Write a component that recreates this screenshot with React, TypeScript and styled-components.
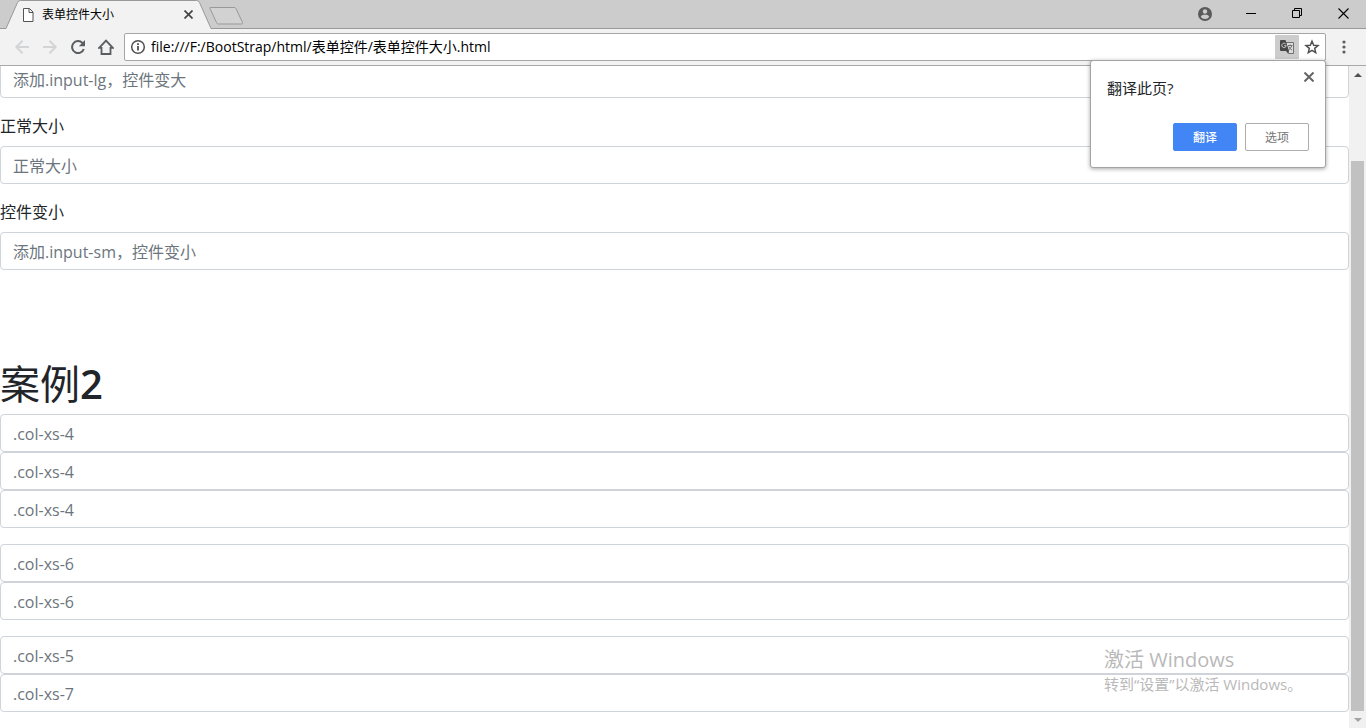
import React from "react";
import styled, { createGlobalStyle } from "styled-components";

const GlobalStyle = createGlobalStyle`
  *, *::before, *::after { box-sizing: border-box; }
  body {
    margin: 0;
    font-family: "Open Sans", "Noto Sans CJK SC", sans-serif;
    font-size: 16px;
    line-height: 24px;
    color: #212529;
    background: #fff;
  }
  button, input { font-family: inherit; }
`;

const Window = styled.div`
  position: relative;
  display: flex;
  flex-direction: column;
  height: 100vh;
  overflow: hidden;
`;

const TabStrip = styled.header`
  display: flex;
  flex: none;
  height: 29px;
  padding-left: 6px;
  background: #ccc;
  box-shadow: inset 0 -1px #999;
`;

const Tab = styled.div`
  position: relative;
  display: flex;
  align-items: center;
  width: 205px;
  padding: 0 16px;
`;

const TabShape = styled.svg`
  position: absolute;
  inset: 0;
`;

const TabTitle = styled.span`
  position: relative;
  flex: 1;
  margin-left: 8px;
  font-size: 12px;
  color: #000;
`;

const FileGlyph = styled.svg`
  position: relative;
  flex: none;
`;

const PlainButton = styled.button`
  display: flex;
  align-items: center;
  justify-content: center;
  flex: none;
  padding: 0;
  border: 0;
  background: none;
  color: inherit;
`;

const TabClose = styled(PlainButton)`
  position: relative;
  width: 14px;
  height: 14px;
  color: #444;
`;

const NewTab = styled(PlainButton)`
  width: 36px;
  height: 29px;
  margin-left: -2px;
`;

const WindowControls = styled.div`
  display: flex;
  margin-left: auto;
`;

const WindowButton = styled(PlainButton)`
  width: 46px;
  height: 27px;
  color: #000;
`;

const Toolbar = styled.nav`
  position: relative;
  z-index: 1;
  display: flex;
  flex: none;
  align-items: center;
  height: 37px;
  padding: 0 8px;
  border-bottom: 1px solid #a9a9a9;
  background: #f2f2f2;
`;

const ToolButton = styled(PlainButton)<{ $muted?: boolean }>`
  width: 28px;
  height: 28px;
  color: ${(p) => (p.$muted ? "#d3d4d6" : "#5a5d62")};
`;

const Omnibox = styled.div`
  display: flex;
  flex: 1;
  align-items: center;
  height: 28px;
  margin: 0 4px;
  padding: 0 1px 0 5px;
  border: 1px solid #a6a6a6;
  border-radius: 2px;
  background: #fff;
`;

const UrlInput = styled.input`
  flex: 1;
  min-width: 0;
  height: 24px;
  margin-left: 5px;
  padding: 0 0 2px;
  border: 0;
  outline: 0;
  background: none;
  font-size: 14px;
  color: #000;
`;

const OmniboxButton = styled(PlainButton)<{ $active?: boolean }>`
  width: 24px;
  height: 24px;
  margin-right: ${(p) => (p.$active ? "1px" : "0")};
  color: #505050;
  border-radius: 1px;
  background: ${(p) => (p.$active ? "#ccc" : "none")};
`;

const Bubble = styled.section`
  position: absolute;
  top: 31px;
  right: 40px;
  display: flex;
  flex-direction: column;
  justify-content: space-between;
  width: 236px;
  height: 108px;
  padding: 15px 16px 16px;
  border: 1px solid #a4a4a4;
  border-radius: 3px;
  background: #fff;
  box-shadow: 0 1px 4px rgba(0, 0, 0, 0.35);
`;

const BubbleTitle = styled.p`
  margin: 0;
  font-size: 15px;
`;

const BubbleClose = styled(PlainButton)`
  position: absolute;
  top: 8px;
  right: 8px;
  width: 16px;
  height: 16px;
  color: #666;
`;

const BubbleActions = styled.div`
  display: flex;
  justify-content: flex-end;
  gap: 8px;
`;

const BubbleButton = styled.button<{ $primary?: boolean }>`
  width: 64px;
  height: 28px;
  padding: 0;
  border: 1px solid ${(p) => (p.$primary ? "#4285f4" : "#adadad")};
  border-radius: 2px;
  background: ${(p) => (p.$primary ? "#4285f4" : "#fff")};
  color: ${(p) => (p.$primary ? "#fff" : "#757575")};
  font-size: 12px;
  font-weight: ${(p) => (p.$primary ? 500 : 400)};
`;

const Viewport = styled.div`
  display: flex;
  flex: 1;
  min-height: 0;
  overflow: hidden;
`;

const Page = styled.main`
  flex: 1;
  min-width: 0;
  margin-top: -6px;
`;

const Group = styled.div`
  margin-bottom: 16px;
`;

const Label = styled.label`
  display: block;
  margin-bottom: 8px;
`;

const Control = styled.input`
  display: block;
  width: 100%;
  height: 38px;
  padding: 7px 12px 5px;
  border: 1px solid #ced4da;
  border-radius: 4px;
  background: #fff;
  font-size: 16px;
  line-height: 24px;
  color: #495057;
  &::placeholder { color: #6c757d; opacity: 1; }
`;

const Heading = styled.h1`
  margin: 90px 0 6px;
  font-size: 40px;
  font-weight: 400;
  line-height: 48px;
`;

const HeadingDigit = styled.span`
  font-weight: 600;
`;

const Scrollbar = styled.div`
  display: flex;
  flex: none;
  flex-direction: column;
  width: 17px;
  background: #f1f1f1;
`;

const ScrollArrow = styled(PlainButton)<{ $muted?: boolean }>`
  height: 17px;
  color: ${(p) => (p.$muted ? "#a3a3a3" : "#505050")};
`;

const ScrollSpace = styled.div`
  flex: 78;
`;

const ScrollThumb = styled.div`
  flex: 550;
  margin: 0 2px;
  background: #c1c1c1;
`;

const Watermark = styled.aside`
  position: absolute;
  right: 62px;
  bottom: 32px;
  width: 200px;
  color: #b9b9b9;
  white-space: nowrap;
  pointer-events: none;
`;

const WatermarkTitle = styled.div`
  font-size: 20px;
`;

const WatermarkText = styled.div`
  font-size: 15px;
`;

const rows = [
  [".col-xs-4", ".col-xs-4", ".col-xs-4"],
  [".col-xs-6", ".col-xs-6"],
  [".col-xs-5", ".col-xs-7"],
];

const Cross = ({ size, width }: { size: number; width: number }) => (
  <svg width={size} height={size} viewBox={`0 0 ${size} ${size}`} stroke="currentColor" strokeWidth={width}>
    <path d={`M.5 .5L${size - 0.5} ${size - 0.5}M${size - 0.5} .5L.5 ${size - 0.5}`} />
  </svg>
);

export default function App() {
  return (
    <Window>
      <GlobalStyle />
      <TabStrip>
        <Tab>
          <TabShape width="205" height="29" viewBox="0 0 205 29">
            <path d="M0 28.5L11.5 2.5Q12.5 .5 14.5 .5H190.5Q192.5 .5 193.5 2.5L205 28.5V29H0Z" fill="#f2f2f2" />
            <path d="M0 28.5L11.5 2.5Q12.5 .5 14.5 .5H190.5Q192.5 .5 193.5 2.5L205 28.5" fill="none" stroke="#999" />
          </TabShape>
          <FileGlyph width="12" height="14" viewBox="0 0 12 14" fill="#fff" stroke="#555" strokeWidth="1">
            <path d="M1.5 .5H7.5L11 4V13.5H1.5ZM7 .5V4.5H11" />
          </FileGlyph>
          <TabTitle>表单控件大小</TabTitle>
          <TabClose aria-label="关闭标签页"><Cross size={9} width={1.7} /></TabClose>
        </Tab>
        <NewTab aria-label="新标签页">
          <svg width="36" height="20" viewBox="0 0 36 20">
            <path d="M1 3.5Q0 2.5 1.5 2.5H25Q26.5 2.5 27 3.5L33.5 17.5Q34 19 32.5 19H9.5Q8 19 7.5 17.5Z" fill="#d2d2d2" stroke="#999" />
          </svg>
        </NewTab>
        <WindowControls>
          <WindowButton aria-label="用户">
            <svg width="14" height="14" viewBox="0 0 14 14">
              <circle cx="7" cy="7" r="7" fill="#5a5a5a" />
              <circle cx="7" cy="4.5" r="2.2" fill="#ccc" />
              <path d="M2.8 9.8C3.2 8 5.5 7.8 7 7.8S10.8 8 11.2 9.8C10.2 11.2 8.7 12 7 12S3.8 11.2 2.8 9.8Z" fill="#ccc" />
            </svg>
          </WindowButton>
          <WindowButton aria-label="最小化">
            <svg width="10" height="11" viewBox="0 0 10 11" stroke="currentColor"><path d="M0 5.5H10" /></svg>
          </WindowButton>
          <WindowButton aria-label="还原">
            <svg width="10" height="11" viewBox="0 0 10 11" fill="none" stroke="currentColor">
              <path d="M.5 2.5H7.5V9.5H.5ZM2.5 2.5V.5H9.5V7.5H7.5" />
            </svg>
          </WindowButton>
          <WindowButton aria-label="关闭"><Cross size={11} width={1.1} /></WindowButton>
        </WindowControls>
      </TabStrip>

      <Toolbar>
        <ToolButton $muted aria-label="后退">
          <svg width="14" height="14" viewBox="0 0 14 14" fill="none" stroke="currentColor" strokeWidth="2">
            <path d="M14 7H1.5M7.5 .8L1.3 7L7.5 13.2" />
          </svg>
        </ToolButton>
        <ToolButton $muted aria-label="前进">
          <svg width="14" height="14" viewBox="0 0 14 14" fill="none" stroke="currentColor" strokeWidth="2">
            <path d="M0 7H12.5M6.5 .8L12.7 7L6.5 13.2" />
          </svg>
        </ToolButton>
        <ToolButton aria-label="重新加载">
          <svg width="14" height="14" viewBox="0 0 14 14" fill="none" stroke="currentColor" strokeWidth="2">
            <path d="M12.8 9A6 6 0 1 1 11.4 2.9L12 3.5" />
            <path d="M14 0V6.2H7.8Z" fill="currentColor" stroke="none" />
          </svg>
        </ToolButton>
        <ToolButton aria-label="主页">
          <svg width="16" height="16" viewBox="0 0 16 16" fill="none" stroke="currentColor" strokeWidth="1.8">
            <path d="M1.2 8.8H3.5V15H12.5V8.8H14.8L8 1.6Z" />
          </svg>
        </ToolButton>
        <Omnibox>
          <svg width="16" height="16" viewBox="0 0 16 16" fill="none" stroke="#505050">
            <circle cx="8" cy="8" r="6.3" strokeWidth="1.5" />
            <path d="M8 7V11.5M8 4.2V6" strokeWidth="1.8" />
          </svg>
          <UrlInput aria-label="地址" defaultValue="file:///F:/BootStrap/html/表单控件/表单控件大小.html" />
          <OmniboxButton $active aria-label="翻译此页">
            <svg width="14" height="14" viewBox="0 0 14 14">
              <path d="M5.5 2.5H13.5V13.5H8.5Z" fill="#ddd" stroke="#707070" />
              <path d="M8 5.5H12.5M10.2 4.5V5.5M11.8 5.8Q11 8.5 8.5 10M8.7 6.5Q10 9 12 10" fill="none" stroke="#707070" />
              <path d="M0 1Q0 0 1 0H5.5L9 11H1Q0 11 0 10Z" fill="#484848" />
              <path d="M5.6 3.9A2.2 2.2 0 1 0 6.2 5.7H4.2" fill="none" stroke="#ccc" />
              <path d="M6 11H9L8 13.5Z" fill="#484848" />
            </svg>
          </OmniboxButton>
          <OmniboxButton aria-label="收藏">
            <svg width="16" height="16" viewBox="0 0 16 16" fill="none" stroke="currentColor" strokeWidth="1.5">
              <path d="M8 2.2L9.7 6.2L14 6.6L10.7 9.4L11.7 13.7L8 11.4L4.3 13.7L5.3 9.4L2 6.6L6.3 6.2Z" />
            </svg>
          </OmniboxButton>
        </Omnibox>
        <ToolButton aria-label="菜单">
          <svg width="4" height="14" viewBox="0 0 4 14" fill="currentColor">
            <circle cx="2" cy="2" r="1.6" /><circle cx="2" cy="7" r="1.6" /><circle cx="2" cy="12" r="1.6" />
          </svg>
        </ToolButton>
        <Bubble role="dialog" aria-label="翻译此页?">
          <BubbleTitle>翻译此页?</BubbleTitle>
          <BubbleClose aria-label="关闭"><Cross size={10} width={2} /></BubbleClose>
          <BubbleActions>
            <BubbleButton $primary>翻译</BubbleButton>
            <BubbleButton>选项</BubbleButton>
          </BubbleActions>
        </Bubble>
      </Toolbar>

      <Viewport>
        <Page>
          <form>
            <Group>
              <Control aria-label="控件变大" placeholder="添加.input-lg，控件变大" />
            </Group>
            <Group>
              <Label htmlFor="normal">正常大小</Label>
              <Control id="normal" placeholder="正常大小" />
            </Group>
            <Group>
              <Label htmlFor="small">控件变小</Label>
              <Control id="small" placeholder="添加.input-sm，控件变小" />
            </Group>
          </form>
          <Heading>案例<HeadingDigit>2</HeadingDigit></Heading>
          <form>
            {rows.map((row, i) => (
              <Group key={i}>
                {row.map((name, j) => (
                  <Control key={j} aria-label={name} placeholder={name} />
                ))}
              </Group>
            ))}
          </form>
        </Page>
        <Scrollbar>
          <ScrollArrow aria-label="向上滚动">
            <svg width="8" height="4" viewBox="0 0 8 4" fill="currentColor"><path d="M0 4L4 0L8 4Z" /></svg>
          </ScrollArrow>
          <ScrollSpace />
          <ScrollThumb />
          <ScrollArrow $muted aria-label="向下滚动">
            <svg width="8" height="4" viewBox="0 0 8 4" fill="currentColor"><path d="M0 0L4 4L8 0Z" /></svg>
          </ScrollArrow>
        </Scrollbar>
      </Viewport>

      <Watermark>
        <WatermarkTitle>激活 Windows</WatermarkTitle>
        <WatermarkText>转到“设置”以激活 Windows。</WatermarkText>
      </Watermark>
    </Window>
  );
}
